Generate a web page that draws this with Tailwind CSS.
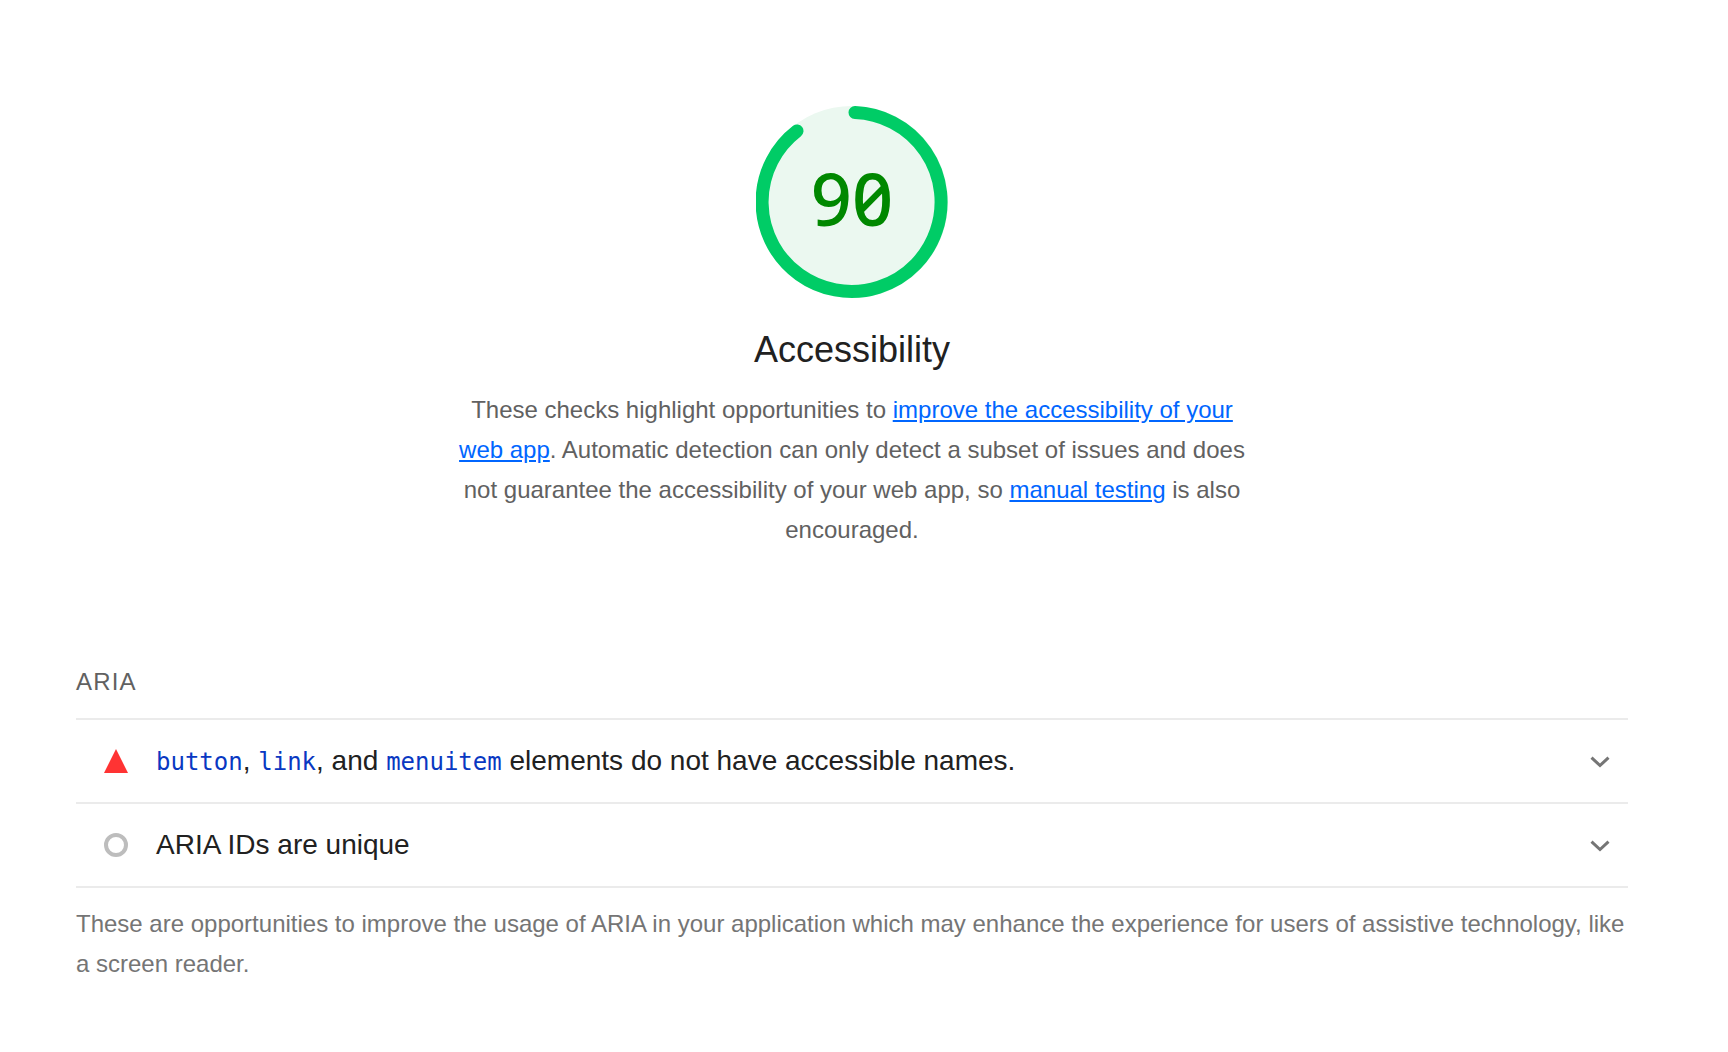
<!DOCTYPE html>
<html lang="en">
  <head>
    <meta charset="UTF-8" />
    <meta name="viewport" content="width=device-width, initial-scale=1.0" />
    <script src="https://cdn.jsdelivr.net/npm/@tailwindcss/browser@4"></script>
    <title>Accessibility report</title>
  </head>
  <body class="bg-white font-['Liberation_Sans',Arial,sans-serif] text-[#212121]">
    <main class="pt-[106px] pr-[100px] pb-16 pl-[76px]">
      <!-- SCORE -->
      <header class="flex flex-col items-center text-center">
        <div class="grid size-48 place-items-center">
          <svg class="col-start-1 row-start-1 size-48" viewBox="0 0 192 192" fill="none" aria-hidden="true">
            <circle cx="96" cy="96" r="96" fill="#ebf8f0" />
            <path d="M99 6.5A89.5 89.5 0 1 1 41 25" stroke="#00cc66" stroke-width="13" stroke-linecap="round" />
          </svg>
          <span class="col-start-1 row-start-1 pb-2 font-['Noto_Sans',sans-serif] text-7xl leading-none font-medium slashed-zero text-[#008800]">90</span>
        </div>
        <h1 class="mt-8 text-4xl leading-10">Accessibility</h1>
        <p class="mt-5 max-w-[800px] text-2xl leading-10 text-[#616161]">
          These checks highlight opportunities to
          <a href="#" class="text-[#0066ff] underline">improve the accessibility of your web app</a>. Automatic detection can only detect a subset of issues and does not guarantee the accessibility of your web app, so
          <a href="#" class="text-[#0066ff] underline">manual testing</a> is also encouraged.
        </p>
      </header>

      <!-- ARIA AUDITS -->
      <section class="mt-28">
        <h2 class="pb-4 text-2xl leading-10 tracking-wider text-[#616161]">ARIA</h2>
        <ul class="border-b-2 border-[#ebebeb]">
          <li class="border-t-2 border-[#ebebeb]">
            <button type="button" class="flex w-full items-center px-7 py-5 text-left text-[28px] leading-[42px]" aria-expanded="false">
              <svg class="mr-7 size-6 shrink-0" viewBox="0 0 24 24" fill="#ff3333" aria-hidden="true">
                <path d="M12 0 24 24H0z" />
              </svg>
              <span class="flex-1"><code class="font-['DejaVu_Sans_Mono',monospace] text-2xl text-[#0938c2]">button</code>, <code class="font-['DejaVu_Sans_Mono',monospace] text-2xl text-[#0938c2]">link</code>, and <code class="font-['DejaVu_Sans_Mono',monospace] text-2xl text-[#0938c2]">menuitem</code> elements do not have accessible names.</span>
              <svg class="-mr-3 size-6 shrink-0" viewBox="0 0 24 24" fill="none" stroke="#757575" stroke-width="3" aria-hidden="true">
                <path d="m3.5 8.7 8.5 7.8 8.5-7.8" />
              </svg>
            </button>
          </li>
          <li class="border-t-2 border-[#ebebeb]">
            <button type="button" class="flex w-full items-center px-7 py-5 text-left text-[28px] leading-[42px]" aria-expanded="false">
              <svg class="mr-7 size-6 shrink-0" viewBox="0 0 24 24" fill="none" aria-hidden="true">
                <circle cx="12" cy="12" r="10" stroke="#bdbdbd" stroke-width="4" />
              </svg>
              <span class="flex-1">ARIA IDs are unique</span>
              <svg class="-mr-3 size-6 shrink-0" viewBox="0 0 24 24" fill="none" stroke="#757575" stroke-width="3" aria-hidden="true">
                <path d="m3.5 8.7 8.5 7.8 8.5-7.8" />
              </svg>
            </button>
          </li>
        </ul>
        <p class="mt-4 text-2xl leading-10 text-[#757575]">These are opportunities to improve the usage of ARIA in your application which may enhance the experience for users of assistive technology, like a screen reader.</p>
      </section>
    </main>
  </body>
</html>
